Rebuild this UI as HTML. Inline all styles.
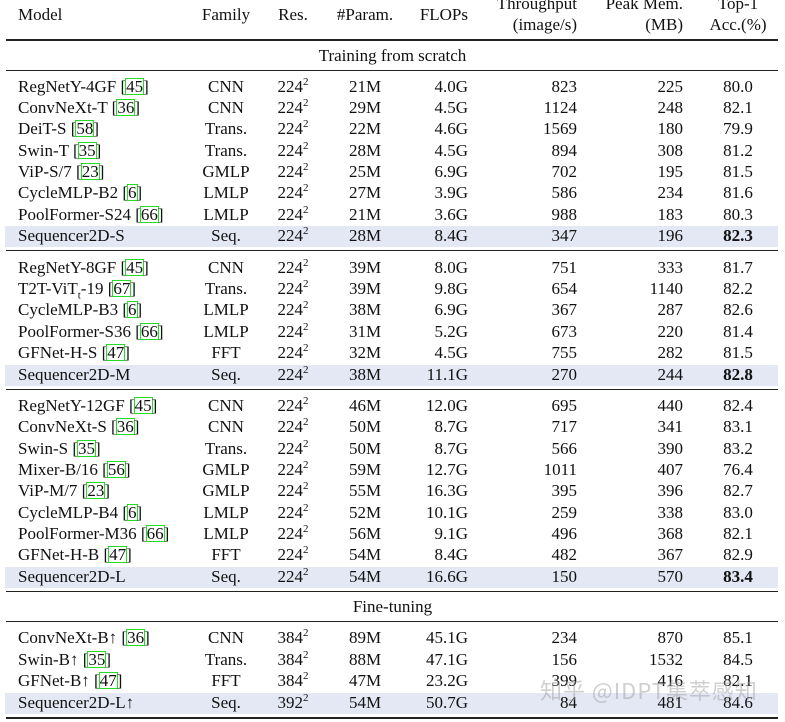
<!DOCTYPE html><html><head><meta charset="utf-8"><style>
body{margin:0;width:785px;height:722px;background:#fff;position:relative;overflow:hidden;font-family:"Liberation Serif",serif;font-size:17px;color:#111}
.r{position:absolute;left:0;width:785px;height:21px;line-height:21px}
.r span{position:absolute;white-space:nowrap}
.hl{position:absolute;left:5px;width:773px;height:21px;background:#e4e7f4}
.ln{position:absolute;left:6px;width:772px;background:#222}
.m{left:18px}.f{left:176px;width:100px;text-align:center}.s{left:258px;width:70px;text-align:center}
.p{left:325px;width:80px;text-align:center}.g{right:317px;text-align:right}.t{right:208px;text-align:right}
.k{right:102px;text-align:right}.a{left:698px;width:80px;text-align:center}
sup{font-size:11px;line-height:0;vertical-align:7px}
.r span.c{position:static;border:1px solid #22dd22;padding:0;margin:0 -1px;line-height:15px;display:inline-block}
.w{position:absolute;left:540px;top:674px;font-family:"Noto Sans CJK SC",sans-serif;font-size:22px;color:rgba(160,160,160,.5);letter-spacing:1px}
</style></head><body>
<div class="r" style="top:4px"><span class="m">Model</span><span class="f">Family</span><span class="s">Res.</span><span class="p">#Param.</span><span class="g">FLOPs</span></div>
<div class="r" style="top:-7px"><span class="t">Throughput</span><span class="k">Peak Mem.</span><span class="a">Top-1</span></div>
<div class="r" style="top:14px"><span class="t">(image/s)</span><span class="k">(MB)</span><span class="a">Acc.(%)</span></div>
<div class="ln" style="top:39px;height:2px"></div>
<div class="r" style="top:45px"><span style="left:0;width:785px;text-align:center">Training from scratch</span></div>
<div class="ln" style="top:70px;height:1px"></div>
<div id="rows"></div>
<div class="ln" style="top:591px;height:1px"></div>
<div class="r" style="top:596px"><span style="left:0;width:785px;text-align:center">Fine-tuning</span></div>
<div class="ln" style="top:621px;height:1px"></div>
<div class="ln" style="top:717px;height:2px"></div>
<div class="ln" style="top:250px;height:1px"></div>
<div class="ln" style="top:389px;height:1px"></div>
<script>
var D=[
[76,"RegNetY-4GF","45","CNN","21M","4.0G","823","225","80.0"],
[97,"ConvNeXt-T","36","CNN","29M","4.5G","1124","248","82.1"],
[118,"DeiT-S","58","Trans.","22M","4.6G","1569","180","79.9"],
[140,"Swin-T","35","Trans.","28M","4.5G","894","308","81.2"],
[161,"ViP-S/7","23","GMLP","25M","6.9G","702","195","81.5"],
[182,"CycleMLP-B2","6","LMLP","27M","3.9G","586","234","81.6"],
[204,"PoolFormer-S24","66","LMLP","21M","3.6G","988","183","80.3"],
[225,"Sequencer2D-S","","Seq.","28M","8.4G","347","196","82.3",1],
[257,"RegNetY-8GF","45","CNN","39M","8.0G","751","333","81.7"],
[278,"T2T-ViT<sub style='font-size:11px'>t</sub>-19","67","Trans.","39M","9.8G","654","1140","82.2"],
[299,"CycleMLP-B3","6","LMLP","38M","6.9G","367","287","82.6"],
[321,"PoolFormer-S36","66","LMLP","31M","5.2G","673","220","81.4"],
[342,"GFNet-H-S","47","FFT","32M","4.5G","755","282","81.5"],
[364,"Sequencer2D-M","","Seq.","38M","11.1G","270","244","82.8",1],
[395,"RegNetY-12GF","45","CNN","46M","12.0G","695","440","82.4"],
[416,"ConvNeXt-S","36","CNN","50M","8.7G","717","341","83.1"],
[438,"Swin-S","35","Trans.","50M","8.7G","566","390","83.2"],
[459,"Mixer-B/16","56","GMLP","59M","12.7G","1011","407","76.4"],
[480,"ViP-M/7","23","GMLP","55M","16.3G","395","396","82.7"],
[502,"CycleMLP-B4","6","LMLP","52M","10.1G","259","338","83.0"],
[523,"PoolFormer-M36","66","LMLP","56M","9.1G","496","368","82.1"],
[544,"GFNet-H-B","47","FFT","54M","8.4G","482","367","82.9"],
[566,"Sequencer2D-L","","Seq.","54M","16.6G","150","570","83.4",1],
[627,"ConvNeXt-B↑","36","CNN","89M","45.1G","234","870","85.1",0,"384"],
[649,"Swin-B↑","35","Trans.","88M","47.1G","156","1532","84.5",0,"384"],
[670,"GFNet-B↑","47","FFT","47M","23.2G","399","416","82.1",0,"384"],
[692,"Sequencer2D-L↑","","Seq.","54M","50.7G","84","481","84.6",2,"392"]];
var h="";D.forEach(function(d){
if(d[9])h+='<div class="hl" style="top:'+(d[0]+1)+'px"></div>';
var m=d[1]+(d[2]?' [<span class="c">'+d[2]+'</span>]':'');
h+='<div class="r" style="top:'+d[0]+'px"><span class="m">'+m+'</span><span class="f">'+d[3]+'</span><span class="s">'+(d[10]||"224")+'<sup>2</sup></span><span class="p">'+d[4]+'</span><span class="g">'+d[5]+'</span><span class="t">'+d[6]+'</span><span class="k">'+d[7]+'</span><span class="a"'+(d[9]==1?' style="font-weight:bold"':'')+'>'+d[8]+'</span></div>';});
document.getElementById("rows").innerHTML=h;
</script>
<div class="w">知乎 @IDPT集萃感知</div>
</body></html>
